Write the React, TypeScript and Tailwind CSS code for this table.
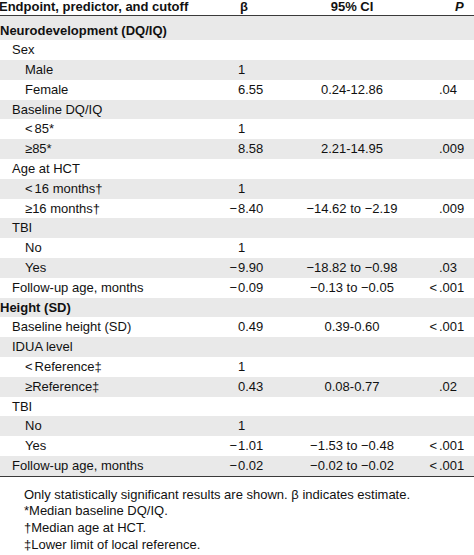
import React from 'react';

interface Row {
    label: string;
    level: number;
    beta?: string;
    ci?: string;
    p?: string;
}

const rows: Row[] = [
    { label: 'Neurodevelopment (DQ/IQ)', level: 0 },
    { label: 'Sex', level: 1 },
    { label: 'Male', level: 2, beta: '1' },
    { label: 'Female', level: 2, beta: '6.55', ci: '0.24-12.86', p: '.04' },
    { label: 'Baseline DQ/IQ', level: 1 },
    { label: '<85*', level: 2, beta: '1' },
    { label: '≥85*', level: 2, beta: '8.58', ci: '2.21-14.95', p: '.009' },
    { label: 'Age at HCT', level: 1 },
    { label: '<16 months†', level: 2, beta: '1' },
    { label: '≥16 months†', level: 2, beta: '−8.40', ci: '−14.62 to −2.19', p: '.009' },
    { label: 'TBI', level: 1 },
    { label: 'No', level: 2, beta: '1' },
    { label: 'Yes', level: 2, beta: '−9.90', ci: '−18.82 to −0.98', p: '.03' },
    { label: 'Follow-up age, months', level: 1, beta: '−0.09', ci: '−0.13 to −0.05', p: '<.001' },
    { label: 'Height (SD)', level: 0 },
    { label: 'Baseline height (SD)', level: 1, beta: '0.49', ci: '0.39-0.60', p: '<.001' },
    { label: 'IDUA level', level: 1 },
    { label: '<Reference‡', level: 2, beta: '1' },
    { label: '≥Reference‡', level: 2, beta: '0.43', ci: '0.08-0.77', p: '.02' },
    { label: 'TBI', level: 1 },
    { label: 'No', level: 2, beta: '1' },
    { label: 'Yes', level: 2, beta: '−1.01', ci: '−1.53 to −0.48', p: '<.001' },
    { label: 'Follow-up age, months', level: 1, beta: '−0.02', ci: '−0.02 to −0.02', p: '<.001' },
];

const indent = ['pl-0 font-bold', 'pl-[12px]', 'pl-[25px]'];

function Label({ text }: { text: string }) {
    if (text.startsWith('<')) {
        return (
            <span>
                <span className="mr-[2px]">&lt;</span>
                {text.slice(1)}
            </span>
        );
    }
    return <span>{text}</span>;
}

function Beta({ value }: { value?: string }) {
    if (!value) return null;
    const neg = value.startsWith('−');
    return (
        <span className="relative">
            {neg && <span className="absolute right-full pr-[1px]">−</span>}
            {neg ? value.slice(1) : value}
        </span>
    );
}

function PValue({ value }: { value?: string }) {
    if (!value) return null;
    const lt = value.startsWith('<');
    return (
        <span className="relative">
            {lt && <span className="absolute right-full pr-[2px]">&lt;</span>}
            {lt ? value.slice(1) : value}
        </span>
    );
}

export default function App() {
    return (
        <div className="w-[474px] h-[555px] overflow-hidden bg-white text-[#111] text-[13px] font-['Liberation_Sans',Arial,sans-serif]">
            <div className="grid grid-cols-[238px_62px_104px_35px_35px] h-[15.5px] leading-[13px] font-bold whitespace-nowrap border-b-[1.5px] border-[#3a3a3a]">
                <div className="-ml-[1px]">Endpoint, predictor, and cutoff</div>
                <div className="pl-[2px]">β</div>
                <div className="text-center">95% CI</div>
                <div></div>
                <div className="pl-[16px] italic">P</div>
            </div>

            <div className="border-b-[1.5px] border-[#3a3a3a]">
                {rows.map((row, i) => (
                    <div
                        key={i}
                        className={`grid grid-cols-[238px_62px_104px_35px_35px] whitespace-nowrap leading-[19.8px] ${
                            i === 0 ? 'pt-[5px]' : ''
                        } ${i % 2 === 0 ? 'bg-[#e9e9e9]' : 'bg-white'}`}
                    >
                        <div className={indent[row.level]}>
                            <Label text={row.label} />
                        </div>
                        <div>
                            <Beta value={row.beta} />
                        </div>
                        <div className="text-center">{row.ci}</div>
                        <div></div>
                        <div>
                            <PValue value={row.p} />
                        </div>
                    </div>
                ))}
            </div>

            <div className="pt-[10px] pl-[24px] leading-[16.6px]">
                <p>Only statistically significant results are shown. β indicates estimate.</p>
                <p>*Median baseline DQ/IQ.</p>
                <p>†Median age at HCT.</p>
                <p>‡Lower limit of local reference.</p>
            </div>
        </div>
    );
}
